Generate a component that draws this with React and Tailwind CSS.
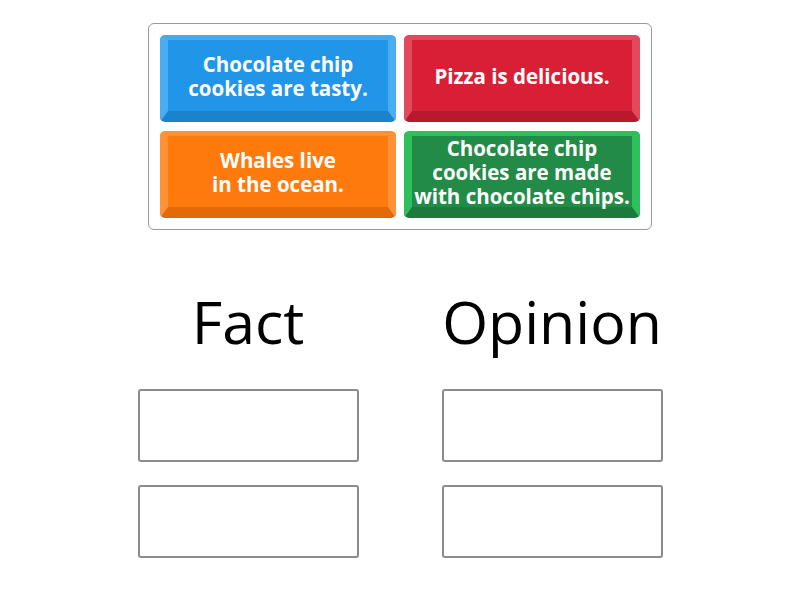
const cards = [
  {
    lines: ['Chocolate chip', 'cookies are tasty.'],
    face: 'bg-[#2196e8] border-t-[#45a9ef] border-x-[#4aacf1] border-b-[#1b82cc]',
  },
  {
    lines: ['Pizza is delicious.'],
    face: 'bg-[#d81f36] border-t-[#e04a5c] border-x-[#e14a5d] border-b-[#b8192c]',
  },
  {
    lines: ['Whales live', 'in the ocean.'],
    face: 'bg-[#ff7a0d] border-t-[#ff9034] border-x-[#ff9236] border-b-[#e26a08]',
  },
  {
    lines: ['Chocolate chip', 'cookies are made', 'with chocolate chips.'],
    face: 'bg-[#238b48] border-t-[#2cbf5c] border-x-[#2dc05d] border-b-[#1d7a3d]',
  },
];

const Card = ({ lines, face }) => (
  <div
    className={`h-[87px] rounded-[5px] border-x-[8px] border-t-[5px] border-b-[11px] flex items-center justify-center text-center text-white font-bold text-[20.5px] leading-6 whitespace-nowrap ${face}`}
  >
    <p>
      {lines.map((l, i) => (
        <span key={i}>
          {i > 0 && <br />}
          {l}
        </span>
      ))}
    </p>
  </div>
);

const Column = ({ title }) => (
  <div className="w-[221px] flex flex-col items-center">
    <h2 className="text-[59px] leading-[80px] text-black">{title}</h2>
    <div className="mt-[28px] w-full h-[73px] border-2 border-[#8c8c8c] rounded-[3px]" />
    <div className="mt-[23px] w-full h-[73px] border-2 border-[#8c8c8c] rounded-[3px]" />
  </div>
);

const App = () => {
  return (
    <div className="w-[800px] h-[600px] bg-white overflow-hidden" style={{ fontFamily: '"Open Sans", sans-serif' }}>
      <div className="mx-auto mt-[23px] w-[504px] border border-[#9a9a9a] rounded-md p-[11px] grid grid-cols-2 gap-x-2 gap-y-[9px]">
        {cards.map((c, i) => (
          <Card key={i} {...c} />
        ))}
      </div>

      <div className="mt-[51px] flex justify-center gap-[83px]">
        <Column title="Fact" />
        <Column title="Opinion" />
      </div>
    </div>
  );
};

export default App;
